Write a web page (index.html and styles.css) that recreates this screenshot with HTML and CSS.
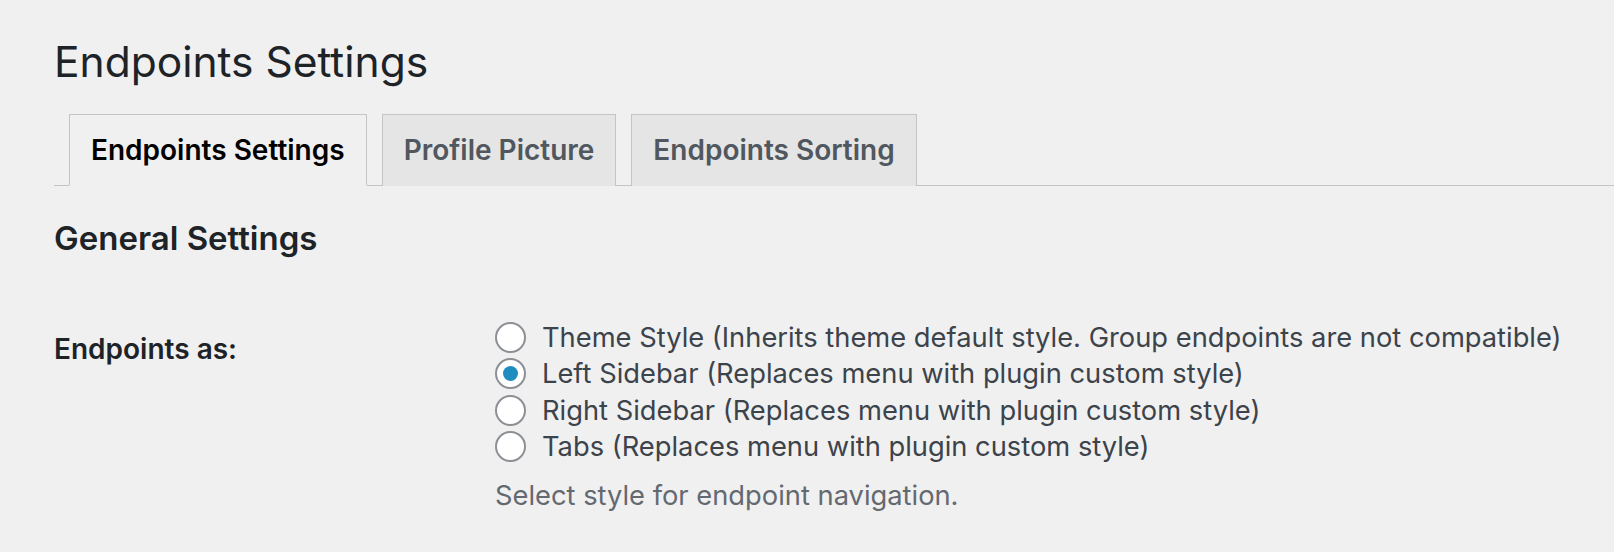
FILE: index.html
```html
<!DOCTYPE html>
<html lang="en">
<head>
<meta charset="utf-8">
<title>Endpoints Settings</title>
<link rel="stylesheet" href="styles.css">
</head>
<body>
<div class="wrap">
  <h1 class="page-title">Endpoints Settings</h1>
  <nav class="nav-tabs">
    <a class="nav-tab active" href="#">Endpoints Settings</a>
    <a class="nav-tab" href="#">Profile Picture</a>
    <a class="nav-tab" href="#">Endpoints Sorting</a>
  </nav>
  <h2 class="section-title">General Settings</h2>
  <div class="form-row">
    <div class="form-label">Endpoints as:</div>
    <div class="form-field">
      <label class="radio-row"><input type="radio" name="style" class="radio"><span>Theme Style (Inherits theme default style. Group endpoints are not compatible)</span></label>
      <label class="radio-row"><input type="radio" name="style" class="radio" checked><span>Left Sidebar (Replaces menu with plugin custom style)</span></label>
      <label class="radio-row"><input type="radio" name="style" class="radio"><span>Right Sidebar (Replaces menu with plugin custom style)</span></label>
      <label class="radio-row"><input type="radio" name="style" class="radio"><span>Tabs (Replaces menu with plugin custom style)</span></label>
      <p class="description">Select style for endpoint navigation.</p>
    </div>
  </div>
</div>
</body>
</html>
```
FILE: styles.css
```css
html, body {
  margin: 0;
  padding: 0;
  background: #f0f0f1;
}
body {
  font-family: "Inter", "Roboto", sans-serif;
  color: #3c434a;
}
.wrap {
  padding: 37px 0 0 54px;
}
.page-title {
  margin: 0;
  font-size: 42.5px;
  line-height: 50px;
  font-weight: 400;
  color: #1d2327;
}
.nav-tabs {
  display: flex;
  gap: 15px;
  margin-top: 27px;
  padding-left: 15px;
  border-bottom: 1px solid #c3c4c7;
}
.nav-tab {
  display: block;
  margin-bottom: -1px;
  padding: 17px 21px 18px;
  border: 1px solid #c3c4c7;
  border-bottom: none;
  background: #e5e5e5;
  color: #50575e;
  font-size: 28px;
  line-height: 36px;
  font-weight: 600;
  text-decoration: none;
}
.nav-tab.active {
  background: #f0f0f1;
  color: #000;
  border-bottom: 1px solid #f0f0f1;
  padding-bottom: 17px;
}
.section-title {
  margin: 34px 0 0;
  font-size: 33px;
  line-height: 36px;
  font-weight: 600;
  color: #1d2327;
}
.form-row {
  display: grid;
  grid-template-columns: 441px 1fr;
  margin-top: 63px;
}
.form-label {
  padding-top: 15px;
  font-size: 28px;
  line-height: 30px;
  font-weight: 600;
  color: #1d2327;
}
.form-field {
  display: flex;
  flex-direction: column;
}
.radio-row {
  display: flex;
  align-items: center;
  gap: 16px;
  height: 36.5px;
  font-size: 27.3px;
  color: #3c434a;
}
.radio {
  appearance: none;
  -webkit-appearance: none;
  margin: 0;
  width: 31px;
  height: 31px;
  flex: none;
  border: 2px solid #8c8f94;
  border-radius: 50%;
  background: #fff;
  display: grid;
  place-items: center;
}
.radio:checked::before {
  content: "";
  width: 15px;
  height: 15px;
  border-radius: 50%;
  background: #1e8cbe;
}
.description {
  margin: 16px 0 0;
  font-size: 27.3px;
  line-height: 30px;
  color: #646970;
}
```
